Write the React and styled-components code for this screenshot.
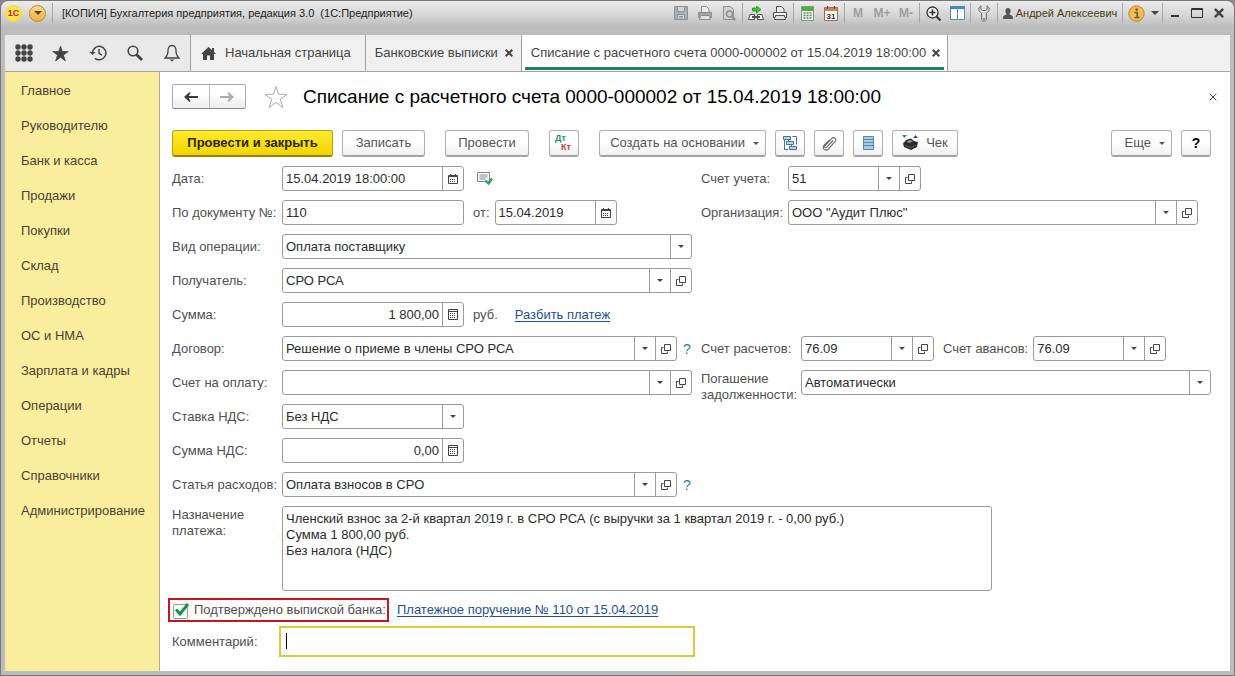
import React from 'react'
import styled, { createGlobalStyle } from 'styled-components'

const GlobalStyle = createGlobalStyle`
    * {
        box-sizing: border-box;
    }

    body {
        margin: 0;
        background: #8c8888;
        color: #444;
        font-family: "Liberation Sans", Arial, sans-serif;
        font-size: 13px;
        line-height: 16px;
    }

    button, input, select, textarea {
        margin: 0;
        padding: 0;
        border: 0;
        border-radius: 0;
        background: none;
        color: inherit;
        font: inherit;
    }
`;

const Window = styled.div`
    display: flex;
    flex-direction: column;
    min-height: 100vh;
    padding: 0 4px 4px;
    border: 1px solid #777;
    border-radius: 8px 8px 0 0;
    background: linear-gradient(#ececec 0, #d6d6d6 14px, #bebebe 25px, #bcbcbc 34px);
`;

const TitleBar = styled.header`
    display: flex;
    align-items: center;
    height: 34px;
    padding-bottom: 10px;
    color: #222;
    font-size: 11px;
`;

const Logo = styled.span`
    display: flex;
    align-items: center;
    justify-content: center;
    width: 17px;
    height: 17px;
    border-radius: 50%;
    background: radial-gradient(#fff27a, #f5d21c);
    color: #c8201a;
    font-size: 9px;
    font-weight: 700;
`;

const MenuButton = styled.button`
    display: flex;
    align-items: center;
    justify-content: center;
    width: 17px;
    height: 17px;
    margin: 0 5px 0 7px;
    border: 1px solid #c08a2c;
    border-radius: 50%;
    background: linear-gradient(#fbd98c, #eeb044);
    color: #6a4210;
`;

const Separator = styled.span`
    width: 1px;
    height: 20px;
    margin: 0 1px;
    background: #a6a6a6;
`;

const AppTitle = styled.span`
    flex: 1;
    min-width: 0;
    padding-left: 8px;
    overflow: hidden;
    white-space: nowrap;
`;

const BarButton = styled.button`
    display: flex;
    align-items: center;
    justify-content: center;
    width: ${({ $width }) => $width || 24}px;
    height: 20px;
    color: ${({ $faded }) => ($faded ? '#a39e9c' : '#444')};
    font-size: 12px;
    font-weight: ${({ $faded }) => ($faded ? 700 : 400)};
`;

const User = styled.span`
    display: flex;
    align-items: center;
    justify-content: center;
    gap: 3px;
    width: 122px;
    color: #4a3c14;
    white-space: nowrap;
`;

const TabBar = styled.nav`
    display: flex;
    height: 37px;
    border-bottom: 1px solid #a3a3a3;
    background: #f0f0f0;
`;

const Tools = styled.div`
    display: flex;
    border-right: 1px solid #a3a3a3;
    background: #e9e9e9;
`;

const ToolButton = styled.button`
    display: flex;
    align-items: center;
    justify-content: center;
    width: 37px;
    color: #444;
`;

const Tab = styled.div`
    display: flex;
    align-items: center;
    padding: 0 ${({ $wide }) => ($wide ? 14 : 8)}px 0 ${({ $wide }) => ($wide ? 10 : 9)}px;
    border-right: 1px solid #a3a3a3;
    gap: ${({ $wide }) => ($wide ? 9 : 7)}px;
    white-space: nowrap;
`;

const ActiveWrap = styled.div`
    display: flex;
    padding-bottom: 1px;
    border-right: 1px solid #a3a3a3;
    background: #fff;
`;

const ActiveTab = styled(Tab)`
    padding: 3px 4px 0 6px;
    margin: 0 3px;
    border-right: 0;
    border-bottom: 3px solid #1e8060;
    gap: 6px;
`;

const CloseButton = styled.button`
    display: flex;
    align-items: center;
    color: #444;
`;

const Body = styled.div`
    display: flex;
    flex: 1;
`;

const Sidebar = styled.aside`
    display: flex;
    flex-direction: column;
    gap: 19px;
    width: 155px;
    padding: 11px 0 0 16px;
    border-right: 1px solid #b5ae88;
    background: #fbed9e;
`;

const SideLink = styled.a`
    color: #4a4233;
    text-decoration: none;
    white-space: nowrap;
`;

const Main = styled.main`
    flex: 1;
    min-width: 0;
    padding: 12px 19px 13px 12px;
    background: #fff;
`;

const Heading = styled.div`
    display: flex;
    align-items: center;
    height: 25px;
    margin: 0 -6px 21px 0;
`;

const History = styled.div`
    display: flex;
    width: 74px;
    height: 25px;
    border: 1px solid #aaa;
    border-bottom-color: #888;
    border-radius: 2px;
    background: linear-gradient(#fff 40%, #ececec);
`;

const HistoryButton = styled.button`
    display: flex;
    flex: 1;
    align-items: center;
    justify-content: center;
    color: ${({ $off }) => ($off ? '#aaa' : '#3c3c3c')};

    & + & {
        border-left: 1px solid #bbb;
    }
`;

const StarButton = styled.button`
    margin: 0 15px 0 18px;
    height: 24px;
    color: #aaa;
`;

const Title = styled.h1`
    flex: 1;
    margin: 0;
    color: #000;
    font-size: 19px;
    font-weight: 400;
    line-height: 24px;
`;

const Toolbar = styled.div`
    display: flex;
    gap: 9px;
    margin-bottom: 9px;
`;

const Group = styled.div`
    display: flex;
    gap: 9px;
    margin-right: 11px;

    &:last-child {
        margin: 0 0 0 auto;
    }
`;

const Button = styled.button`
    display: flex;
    align-items: center;
    justify-content: center;
    gap: 7px;
    width: ${({ $width }) => $width || 30}px;
    height: 27px;
    border: 1px solid #b0b0b0;
    border-bottom: 2px solid #a2a2a2;
    border-radius: 3px;
    background: linear-gradient(#fff 50%, #f0f0f0);
    color: #555;
    white-space: nowrap;
`;

const PrimaryButton = styled(Button)`
    border-color: #b5a012;
    border-bottom-color: #94820c;
    background: linear-gradient(#ffe92e, #f2d500);
    color: #2a2400;
    font-weight: 700;
`;

const MenuDrop = styled(Button)`
    justify-content: flex-end;
    padding-right: 6px;
    gap: 8px;
`;

const HelpButton = styled(Button)`
    color: #000;
    font-size: 14px;
    font-weight: 700;
`;

const Form = styled.form`
    display: flex;
    flex-direction: column;
    gap: 9px;
`;

const Row = styled.div`
    display: grid;
    grid-template-columns: minmax(0, 52fr) minmax(0, 51fr);
    grid-template-rows: 25px;
    gap: 9px;
`;

const Half = styled.div`
    display: flex;
    align-items: center;
    padding-right: ${({ $inset }) => ($inset ? 13 : 0)}px;
`;

const Label = styled.label`
    flex: none;
    width: ${({ $width }) => $width || 110}px;
    color: #505050;
`;

const TallLabel = styled(Label)`
    align-self: flex-start;
    padding-top: 1px;
`;

const Unit = styled.label`
    padding: 0 5px 0 9px;
    color: #505050;
`;

const Status = styled.span`
    display: flex;
    padding-left: 13px;
`;

const Field = styled.div`
    display: flex;
    flex: ${({ $width }) => ($width ? `0 0 ${$width}px` : '1')};
    min-width: 0;
    height: 25px;
    border: 1px solid #9a9a9a;
    border-radius: 3px;
    background: #fff;
`;

const Input = styled.input`
    flex: 1;
    width: 0;
    padding: 0 3px;
    color: #2c2c2c;
    text-align: ${({ $right }) => ($right ? 'right' : 'left')};
    outline: 0;
`;

const Select = styled.select`
    flex: 1;
    width: 0;
    padding: 0 3px;
    color: #2c2c2c;
    appearance: none;
    outline: 0;
`;

const Part = styled.button`
    display: flex;
    align-items: center;
    justify-content: center;
    width: 21px;
    border-left: 1px solid #9a9a9a;
    color: #444;
`;

const Help = styled.button`
    width: 15px;
    padding-left: 5px;
    color: #1e7cb8;
    font-size: 14px;
`;

const Link = styled.a`
    color: #1f4f96;
    text-decoration: underline;
    text-underline-offset: 2px;

    ${Unit} + & {
        margin-left: 12px;
    }
`;

const Purpose = styled.div`
    display: flex;
`;

const TextArea = styled.textarea`
    flex: 1;
    max-width: 710px;
    height: 85px;
    padding: 4px 3px;
    border: 1px solid #9a9a9a;
    border-radius: 3px;
    color: #2c2c2c;
    resize: none;
`;

const Confirm = styled.div`
    display: flex;
    align-items: center;
    gap: 8px;
    margin: -2px 0 -5px -4px;
`;

const CheckFrame = styled.label`
    display: flex;
    align-items: center;
    gap: 4px;
    height: 24px;
    padding: 0 1px 0 3px;
    border: 2px solid #c4161c;
    color: #505050;
    white-space: nowrap;
`;

const CheckBox = styled.span`
    display: grid;

    > * {
        grid-area: 1 / 1;
    }

    input {
        width: 15px;
        height: 15px;
        align-self: end;
        border: 1px solid #999;
        border-radius: 2px;
        appearance: none;
    }

    svg {
        pointer-events: none;
    }

    input:not(:checked) + svg {
        visibility: hidden;
    }
`;

const CommentRow = styled.div`
    display: flex;
    align-items: center;
`;

const CommentBox = styled.div`
    position: relative;
    flex: 1;
    max-width: 416px;
    margin-left: -3px;

    &:has(input:placeholder-shown)::after {
        content: "";
        position: absolute;
        top: 7px;
        left: 7px;
        width: 1px;
        height: 16px;
        background: #000;
        pointer-events: none;
    }
`;

const CommentInput = styled.input`
    display: block;
    width: 100%;
    height: 31px;
    padding: 0 5px;
    border: 2px solid #e3c63c;
    color: #000;
    outline: 0;

    &:placeholder-shown {
        caret-color: transparent;
    }
`;

const Caret = ({ size = 6 }) => (
    <svg width={size} height={size / 2} viewBox="0 0 6 3" fill="currentColor">
        <path d="M0 0h6L3 3z" />
    </svg>
)

const OpenIcon = () => (
    <svg width="10" height="10" viewBox="0 0 10 10" fill="none" stroke="currentColor">
        <path d="M3.5.5h6v6h-6zM2.500 3.500h-2v6h6v-2" />
    </svg>
)

const DateIcon = () => (
    <svg width="10" height="10" viewBox="0 0 10 10" fill="none" stroke="currentColor">
        <path d="M.5 1.500h9v8h-9z" />
        <path d="M1 2.500h8M2.500 0v2M7.500 0v2" />
        <path d="M2 5.500h6M2 7.500h6" strokeDasharray="1 1" />
    </svg>
)

const CalcIcon = () => (
    <svg width="10" height="11" viewBox="0 0 10 11" fill="none" stroke="currentColor">
        <path d="M.5.5h9v10h-9zM1 2.500h8" />
        <path d="M2 4.500h6M2 6.500h6M2 8.500h6" strokeDasharray="1 1" />
    </svg>
)

const Cross = ({ size = 8, weight = 2 }) => (
    <svg width={size} height={size} viewBox="0 0 8 8" stroke="currentColor" strokeWidth={weight}>
        <path d="M.7.7l6.600 6.600M7.300.7L.7 7.300" />
    </svg>
)

const Arrow = ({ back }) => (
    <svg width="14" height="10" viewBox="0 0 14 10" fill="currentColor">
        <path d={back ? 'M0 5l5.500-5 1 .8L4.800 4H14v2H4.800l1.700 3.200-1 .8z' : 'M14 5L8.500 0l-1 .8L9.200 4H0v2h9.200L7.500 9.200l1 .8z'} />
    </svg>
)

const Star = ({ size, filled }) => (
    <svg width={size} height={size} viewBox="0 0 24 24" fill={filled ? 'currentColor' : 'none'} stroke="currentColor">
        <path d="M12 1.500l2.600 7.800h8.400l-6.800 4.900 2.700 8.300-6.900-5.100-6.900 5.100 2.700-8.300L1 9.300h8.400z" />
    </svg>
)

const Grid = () => (
    <svg width="18" height="18" viewBox="0 0 18 18" fill="currentColor">
        {[3, 9, 15].map(y => [3, 9, 15].map(x => <circle key={`${x}-${y}`} cx={x} cy={y} r="2.700" />))}
    </svg>
)

const Clock = () => (
    <svg width="18" height="16" viewBox="0 0 18 16" fill="none" stroke="currentColor" strokeWidth="1.500">
        <path d="M3.500 8A6.700 6.700 0 1 1 6 13.300" />
        <path d="M10 4v4.300l3 1.900" />
        <path d="M.5 7l3 3 3-3z" fill="currentColor" stroke="none" />
    </svg>
)

const Search = () => (
    <svg width="16" height="16" viewBox="0 0 16 16" fill="none" stroke="currentColor">
        <circle cx="6" cy="6" r="4.800" strokeWidth="1.600" />
        <path d="M9.500 9.500L15 15" strokeWidth="2.800" />
    </svg>
)

const Bell = () => (
    <svg width="16" height="18" viewBox="0 0 16 18" fill="none" stroke="currentColor" strokeWidth="1.300">
        <path d="M8 1.500c-3 0-4 2.500-4 5 0 4-1 6-3 7.500h14c-2-1.500-3-3.500-3-7.500 0-2.500-1-5-4-5z" />
        <path d="M5.500 15.500h5L8 17.500z" fill="currentColor" stroke="none" />
    </svg>
)

const Home = () => (
    <svg width="15" height="13" viewBox="0 0 15 13" fill="currentColor">
        <path d="M7.500 0L0 7h2v6h4V8.500h3V13h4V7h2l-2-2V1h-2v2z" />
    </svg>
)

const Floppy = () => (
    <svg width="14" height="14" viewBox="0 0 14 14" fill="#aab0b6" stroke="#8d9298">
        <path d="M.5.5h13v13H.5z" />
        <path d="M3.500.5h7v5h-7zM3.500 8.500h7v5h-7z" fill="#d2d4d6" />
        <path d="M5 10.500h4M5 12h4" />
    </svg>
)

const Printer = ({ active }) => (
    <svg width="16" height="15" viewBox="0 0 16 15" fill={active ? '#f4f4f4' : '#a4a4a4'} stroke={active ? '#555' : '#8c8c8c'}>
        <path d="M4.500 6V.5h5l2.500 2.500v3" fill="#eaeaea" />
        <path d="M1.500 6.500h13v5h-13z" />
        <path d="M3.500 9.500h9l1 4h-11z" fill="#e0e0e0" />
    </svg>
)

const Preview = () => (
    <svg width="14" height="15" viewBox="0 0 14 15" fill="none" stroke="#8f8f8f">
        <path d="M1.500.5h7l3 3v10h-10z" fill="#d0d0d0" />
        <circle cx="7.500" cy="8" r="3" strokeWidth="1.500" />
        <path d="M9.700 10.300l3.500 3.700" strokeWidth="2" />
    </svg>
)

const LinkGo = () => (
    <svg width="16" height="15" viewBox="0 0 16 15" fill="none" stroke="#555">
        <path d="M4.500 2h4V0l4.500 3.500L8.500 7V5h-4z" fill="#3ccc2c" stroke="#1c7d1c" strokeWidth=".7" />
        <path d="M2 8.500h4.500v5h-6zM9.500 8.500H14l1.500 5h-6z" fill="#f2f2f2" />
        <path d="M4 11h8" strokeWidth="2" />
    </svg>
)

const GreenCalc = () => (
    <svg width="13" height="15" viewBox="0 0 13 15" fill="none">
        <path d="M.5.5h12v14H.5z" fill="#f4f4f4" stroke="#7d9a7a" />
        <path d="M1 1h11v4H1z" fill="#4fae4a" />
        <path d="M2.500 7h8M2.500 9.500h8M2.500 12h8" stroke="#5a8a58" strokeDasharray="2 1" strokeWidth="1.500" />
    </svg>
)

const Calendar31 = () => (
    <svg width="14" height="15" viewBox="0 0 14 15">
        <path d="M.5 1.500h13v13H.5z" fill="#f8f8f8" stroke="#94705a" />
        <path d="M1 2h12v3H1z" fill="#cf8350" />
        <path d="M3.500 0v3M10.500 0v3" stroke="#754425" />
        <text x="7" y="13" fill="#333" fontSize="8" fontWeight="700" textAnchor="middle">31</text>
    </svg>
)

const ZoomIn = () => (
    <svg width="15" height="15" viewBox="0 0 15 15" fill="none" stroke="#333">
        <circle cx="6.500" cy="6.500" r="5.500" fill="#f0f0f0" strokeWidth="1.300" />
        <path d="M3.500 6.500h6M6.500 3.500v6" strokeWidth="1.600" />
        <path d="M10.500 10.500l4 4" strokeWidth="2" />
    </svg>
)

const Panels = () => (
    <svg width="15" height="14" viewBox="0 0 15 14">
        <path d="M.5.5h14v13H.5z" fill="#fff" stroke="#5b87ad" />
        <path d="M0 0h15v3H0z" fill="#3d8bcb" />
        <path d="M7.500 3v11" stroke="#5b87ad" />
    </svg>
)

const Wrench = () => (
    <svg width="12" height="17" viewBox="0 0 12 17" fill="#e2e2e2" stroke="#666">
        <path d="M3 .8v3.700l1.500 1h3l1.500-1V.8c2 1 2.500 3 2 4.500-.5 1.500-1.500 2.200-2.700 2.700v6c0 3-4.600 3-4.600 0V8C2.500 7.500 1.500 6.800 1 5.300.5 3.800 1 1.800 3 .8z" />
        <circle cx="6" cy="14" r=".6" />
    </svg>
)

const Person = () => (
    <svg width="10" height="11" viewBox="0 0 10 11" fill="#555">
        <path d="M5 0c3.500 0 3 4.500 1.300 6 .5 1.300 3.400 1 3.700 3.500V11H0V9.500C.3 7 3.200 7.300 3.700 6 2 4.500 1.500 0 5 0z" />
    </svg>
)

const Info = () => (
    <svg width="17" height="17" viewBox="0 0 17 17">
        <circle cx="8.500" cy="8.500" r="7.700" fill="#f3bc4e" stroke="#b9832b" />
        <path d="M6.500 7.500h2.800V13M6.500 12.500h5" fill="none" stroke="#6a5a48" strokeWidth="1.600" />
        <circle cx="8.700" cy="4.600" r="1.300" fill="#6a5a48" />
    </svg>
)

const Minimize = () => (
    <svg width="8" height="12" viewBox="0 0 8 12">
        <path d="M0 9h8" stroke="#333" strokeWidth="2" />
    </svg>
)

const Maximize = () => (
    <svg width="12" height="10" viewBox="0 0 12 10" fill="none" stroke="#333">
        <path d="M.5.5h11v9H.5zM0 1.500h12" />
    </svg>
)

const DtKt = () => (
    <svg width="18" height="18" viewBox="0 0 18 18" fontSize="9" fontWeight="700">
        <text x="0" y="7" fill="#1f9268">Дт</text>
        <text x="6" y="16" fill="#c9423f">Кт</text>
    </svg>
)

const Structure = () => (
    <svg width="15" height="15" viewBox="0 0 15 15" fill="#b5d5e8" stroke="#3f7696">
        <path d="M.5.5h7v3h-7zM3.500 5.500h7v3h-7zM6.500 10.500h7v3h-7z" />
        <path d="M1.500 4v9.500H5M9.500.5h4v8M5.500 4v1.500M8.500 9v1.500" fill="none" />
    </svg>
)

const Clip = () => (
    <svg width="15" height="15" viewBox="0 0 15 15" fill="none" stroke="#666" strokeWidth="1.100">
        <path d="M11 4.500l-6.200 6.600c-1.300 1.300-2.900-.1-1.700-1.500l6.400-7c2.400-2.500 5.700.4 3.500 3l-6.500 7.200c-3 3.100-7-.3-4.300-3.600L7.500 4" />
    </svg>
)

const ListIcon = () => (
    <svg width="11" height="14" viewBox="0 0 11 14" fill="#a9cbe0" stroke="#5a88a8">
        <path d="M.5.5h10v13H.5zM1 3.500h9M1 6.500h9M1 9.500h9" />
    </svg>
)

const CheckPrinter = () => (
    <svg width="17" height="16" viewBox="0 0 17 16">
        <path d="M1 8.500l3-3.500 5-1.500 3 2.500 4 1-1 5-6 3-7-3z" fill="#2c2c2c" />
        <path d="M4.500 6.500l4-1.500 2.500 1.500-4 1.500z" fill="#999" />
        <path d="M3 10.500l6 2 5-2.500" fill="none" stroke="#777" strokeWidth=".7" />
        <path d="M0 0h5L2.500 3z" fill="#259a68" />
        <path d="M11 3l2.500-3L16 3z" fill="#334b88" />
    </svg>
)

const Posted = () => (
    <svg width="16" height="13" viewBox="0 0 16 13" fill="none" stroke="#7d8690">
        <path d="M.5.5h12v9H.5z" fill="#fff" />
        <path d="M2.500 3h8M2.500 5h8M2.500 7h6" />
        <path d="M8.500 8.500l3 3 3.500-5" stroke="#35a055" strokeWidth="2.400" />
    </svg>
)

const CheckMark = () => (
    <svg width="17" height="17" viewBox="0 0 17 17" fill="none" stroke="#0f9350" strokeWidth="3">
        <path d="M3 7.500l4 4.500L15 2" />
    </svg>
)

const sections = [
    'Главное', 'Руководителю', 'Банк и касса', 'Продажи', 'Покупки', 'Склад', 'Производство',
    'ОС и НМА', 'Зарплата и кадры', 'Операции', 'Отчеты', 'Справочники', 'Администрирование',
]

const docName = 'Списание с расчетного счета 0000-000002 от 15.04.2019 18:00:00'

const purpose = `Членский взнос за 2-й квартал 2019 г. в СРО РСА (с выручки за 1 квартал 2019 г. - 0,00 руб.)
Сумма 1 800,00 руб.
Без налога (НДС)`

function TextField({ id, value, width, icon, right }) {
    return (
        <Field $width={width}>
            <Input id={id} defaultValue={value} $right={right} />
            {icon && <Part type="button" aria-label="Выбрать">{icon}</Part>}
        </Field>
    )
}

function SelectField({ id, value, width, open }) {
    return (
        <Field $width={width}>
            <Select id={id} defaultValue={value}>
                <option>{value}</option>
            </Select>
            <Part as="span"><Caret /></Part>
            {open && <Part type="button" aria-label="Открыть"><OpenIcon /></Part>}
        </Field>
    )
}

function Top() {
    return (
        <TitleBar>
            <Logo>1С</Logo>
            <MenuButton aria-label="Меню"><Caret size={8} /></MenuButton>
            <Separator />
            <AppTitle>[КОПИЯ] Бухгалтерия предприятия, редакция 3.0&nbsp; (1С:Предприятие)</AppTitle>
            <BarButton aria-label="Сохранить"><Floppy /></BarButton>
            <BarButton aria-label="Печать"><Printer /></BarButton>
            <BarButton aria-label="Просмотр"><Preview /></BarButton>
            <Separator />
            <BarButton aria-label="Перейти по ссылке"><LinkGo /></BarButton>
            <BarButton aria-label="Получить ссылку"><Printer active /></BarButton>
            <Separator />
            <BarButton aria-label="Калькулятор"><GreenCalc /></BarButton>
            <BarButton aria-label="Календарь"><Calendar31 /></BarButton>
            <Separator />
            <BarButton $faded>M</BarButton>
            <BarButton $faded>M+</BarButton>
            <BarButton $faded>M-</BarButton>
            <Separator />
            <BarButton aria-label="Масштаб"><ZoomIn /></BarButton>
            <BarButton aria-label="Панели"><Panels /></BarButton>
            <Separator />
            <BarButton aria-label="Настройки"><Wrench /></BarButton>
            <Separator />
            <User><Person />Андрей Алексеевич</User>
            <Separator />
            <BarButton aria-label="Информация"><Info /></BarButton>
            <BarButton $width={13} aria-label="Еще"><Caret size={8} /></BarButton>
            <Separator />
            <BarButton $width={22} aria-label="Свернуть"><Minimize /></BarButton>
            <BarButton $width={22} aria-label="Развернуть"><Maximize /></BarButton>
            <BarButton $width={22} aria-label="Закрыть"><Cross size={10} /></BarButton>
        </TitleBar>
    )
}

function Tabs() {
    return (
        <TabBar>
            <Tools>
                <ToolButton aria-label="Разделы"><Grid /></ToolButton>
                <ToolButton aria-label="Избранное"><Star size={17} filled /></ToolButton>
                <ToolButton aria-label="История"><Clock /></ToolButton>
                <ToolButton aria-label="Поиск"><Search /></ToolButton>
                <ToolButton aria-label="Оповещения"><Bell /></ToolButton>
            </Tools>
            <Tab $wide><Home />Начальная страница</Tab>
            <Tab>Банковские выписки<CloseButton aria-label="Закрыть"><Cross /></CloseButton></Tab>
            <ActiveWrap>
                <ActiveTab>{docName}<CloseButton aria-label="Закрыть"><Cross /></CloseButton></ActiveTab>
            </ActiveWrap>
        </TabBar>
    )
}

function Commands() {
    return (
        <Toolbar>
            <Group>
                <PrimaryButton $width={161}>Провести и закрыть</PrimaryButton>
                <Button $width={83}>Записать</Button>
            </Group>
            <Group>
                <Button $width={84}>Провести</Button>
            </Group>
            <Group>
                <Button aria-label="Дт Кт"><DtKt /></Button>
            </Group>
            <Group>
                <MenuDrop $width={167}>Создать на основании<Caret /></MenuDrop>
                <Button aria-label="Структура"><Structure /></Button>
                <Button aria-label="Файлы"><Clip /></Button>
                <Button aria-label="Список"><ListIcon /></Button>
                <Button $width={66}><CheckPrinter />Чек</Button>
            </Group>
            <Group>
                <MenuDrop $width={61}>Еще<Caret /></MenuDrop>
                <HelpButton>?</HelpButton>
            </Group>
        </Toolbar>
    )
}

export default function App() {
    return (
        <>
            <GlobalStyle />
            <Window>
                <Top />
                <Tabs />
                <Body>
                    <Sidebar>
                        {sections.map(name => <SideLink key={name} href="#">{name}</SideLink>)}
                    </Sidebar>
                    <Main>
                        <Heading>
                            <History>
                                <HistoryButton aria-label="Назад"><Arrow back /></HistoryButton>
                                <HistoryButton $off aria-label="Вперед"><Arrow /></HistoryButton>
                            </History>
                            <StarButton aria-label="В избранное"><Star size={24} /></StarButton>
                            <Title>{docName}</Title>
                            <CloseButton aria-label="Закрыть"><Cross weight={1} /></CloseButton>
                        </Heading>
                        <Commands />
                        <Form>
                            <Row>
                                <Half>
                                    <Label htmlFor="date">Дата:</Label>
                                    <TextField id="date" value="15.04.2019 18:00:00" width={182} icon={<DateIcon />} />
                                    <Status><Posted /></Status>
                                </Half>
                                <Half>
                                    <Label htmlFor="account" $width={87}>Счет учета:</Label>
                                    <SelectField id="account" value="51" width={133} open />
                                </Half>
                            </Row>
                            <Row>
                                <Half>
                                    <Label htmlFor="number">По документу №:</Label>
                                    <TextField id="number" value="110" width={182} />
                                    <Unit htmlFor="from">от:</Unit>
                                    <TextField id="from" value="15.04.2019" width={122} icon={<DateIcon />} />
                                </Half>
                                <Half $inset>
                                    <Label htmlFor="org" $width={87}>Организация:</Label>
                                    <SelectField id="org" value={'ООО "Аудит Плюс"'} open />
                                </Half>
                            </Row>
                            <Row>
                                <Half>
                                    <Label htmlFor="kind">Вид операции:</Label>
                                    <SelectField id="kind" value="Оплата поставщику" />
                                </Half>
                            </Row>
                            <Row>
                                <Half>
                                    <Label htmlFor="payee">Получатель:</Label>
                                    <SelectField id="payee" value="СРО РСА" open />
                                </Half>
                            </Row>
                            <Row>
                                <Half>
                                    <Label htmlFor="sum">Сумма:</Label>
                                    <TextField id="sum" value="1 800,00" width={182} icon={<CalcIcon />} right />
                                    <Unit as="span">руб.</Unit>
                                    <Link href="#">Разбить платеж</Link>
                                </Half>
                            </Row>
                            <Row>
                                <Half>
                                    <Label htmlFor="contract">Договор:</Label>
                                    <SelectField id="contract" value="Решение о приеме в члены СРО РСА" open />
                                    <Help type="button">?</Help>
                                </Half>
                                <Half>
                                    <Label htmlFor="settle" $width={100}>Счет расчетов:</Label>
                                    <SelectField id="settle" value="76.09" width={133} open />
                                    <Unit htmlFor="advance">Счет авансов:</Unit>
                                    <SelectField id="advance" value="76.09" width={133} open />
                                </Half>
                            </Row>
                            <Row>
                                <Half>
                                    <Label htmlFor="invoice">Счет на оплату:</Label>
                                    <SelectField id="invoice" value="" open />
                                </Half>
                                <Half>
                                    <TallLabel htmlFor="debt" $width={100}>Погашение задолженности:</TallLabel>
                                    <SelectField id="debt" value="Автоматически" />
                                </Half>
                            </Row>
                            <Row>
                                <Half>
                                    <Label htmlFor="vat">Ставка НДС:</Label>
                                    <SelectField id="vat" value="Без НДС" width={182} />
                                </Half>
                            </Row>
                            <Row>
                                <Half>
                                    <Label htmlFor="vatsum">Сумма НДС:</Label>
                                    <TextField id="vatsum" value="0,00" width={182} icon={<CalcIcon />} right />
                                </Half>
                            </Row>
                            <Row>
                                <Half>
                                    <Label htmlFor="expense">Статья расходов:</Label>
                                    <SelectField id="expense" value="Оплата взносов в СРО" open />
                                    <Help type="button">?</Help>
                                </Half>
                            </Row>
                            <Purpose>
                                <TallLabel htmlFor="purpose">Назначение платежа:</TallLabel>
                                <TextArea id="purpose" defaultValue={purpose} />
                            </Purpose>
                            <Confirm>
                                <CheckFrame>
                                    <CheckBox>
                                        <input type="checkbox" defaultChecked />
                                        <CheckMark />
                                    </CheckBox>
                                    Подтверждено выпиской банка:
                                </CheckFrame>
                                <Link href="#">Платежное поручение № 110 от 15.04.2019</Link>
                            </Confirm>
                            <CommentRow>
                                <Label htmlFor="comment">Комментарий:</Label>
                                <CommentBox>
                                    <CommentInput id="comment" placeholder=" " />
                                </CommentBox>
                            </CommentRow>
                        </Form>
                    </Main>
                </Body>
            </Window>
        </>
    )
}
